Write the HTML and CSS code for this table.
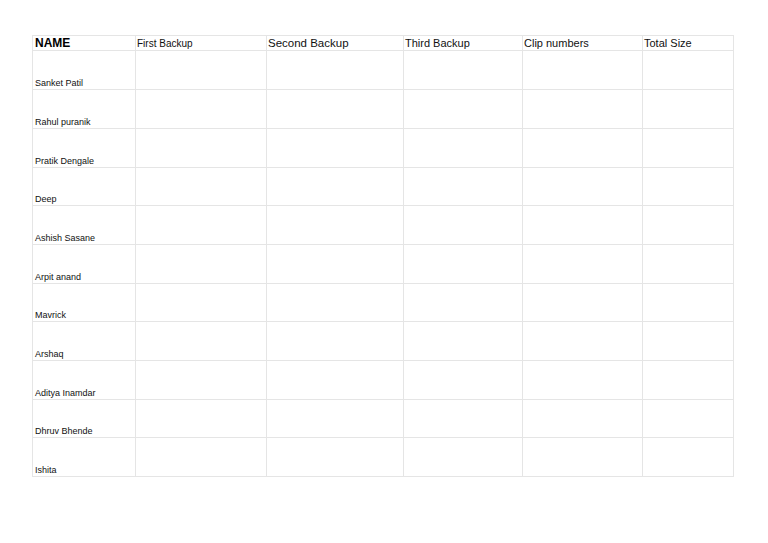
FILE: index.html
```html
<!DOCTYPE html>
<html>
<head>
<meta charset="utf-8">
<link rel="stylesheet" href="styles.css">
</head>
<body>
<div class="sheet">
  <div class="cell head name-head">NAME</div>
  <div class="cell head small">First Backup</div>
  <div class="cell head large">Second Backup</div>
  <div class="cell head">Third Backup</div>
  <div class="cell head">Clip numbers</div>
  <div class="cell head">Total Size</div>

  <div class="cell name">Sanket Patil</div><div class="cell"></div><div class="cell"></div><div class="cell"></div><div class="cell"></div><div class="cell"></div>
  <div class="cell name">Rahul puranik</div><div class="cell"></div><div class="cell"></div><div class="cell"></div><div class="cell"></div><div class="cell"></div>
  <div class="cell name">Pratik Dengale</div><div class="cell"></div><div class="cell"></div><div class="cell"></div><div class="cell"></div><div class="cell"></div>
  <div class="cell name">Deep</div><div class="cell"></div><div class="cell"></div><div class="cell"></div><div class="cell"></div><div class="cell"></div>
  <div class="cell name">Ashish Sasane</div><div class="cell"></div><div class="cell"></div><div class="cell"></div><div class="cell"></div><div class="cell"></div>
  <div class="cell name">Arpit anand</div><div class="cell"></div><div class="cell"></div><div class="cell"></div><div class="cell"></div><div class="cell"></div>
  <div class="cell name">Mavrick</div><div class="cell"></div><div class="cell"></div><div class="cell"></div><div class="cell"></div><div class="cell"></div>
  <div class="cell name">Arshaq</div><div class="cell"></div><div class="cell"></div><div class="cell"></div><div class="cell"></div><div class="cell"></div>
  <div class="cell name">Aditya Inamdar</div><div class="cell"></div><div class="cell"></div><div class="cell"></div><div class="cell"></div><div class="cell"></div>
  <div class="cell name">Dhruv Bhende</div><div class="cell"></div><div class="cell"></div><div class="cell"></div><div class="cell"></div><div class="cell"></div>
  <div class="cell name">Ishita</div><div class="cell"></div><div class="cell"></div><div class="cell"></div><div class="cell"></div><div class="cell"></div>
</div>
</body>
</html>
```
FILE: styles.css
```css
html, body {
  margin: 0;
  padding: 0;
  background: #ffffff;
}
body {
  font-family: "Liberation Sans", Arial, sans-serif;
  color: #000;
}
.sheet {
  margin: 35px 0 0 32px;
  width: 702px;
  box-sizing: border-box;
  display: grid;
  grid-template-columns: 102px 130px 136px 118px 119px 90px;
  grid-template-rows: 14px 38px 38px 38px 37px 38px 38px 37px 38px 38px 37px 38px;
  gap: 1px;
  padding: 1px;
  background: #e5e5e5;
}
.cell {
  background: #fff;
  overflow: hidden;
  white-space: nowrap;
}
.head {
  font-size: 11px;
  line-height: 14px;
  padding: 0 0 0 1px;
  box-sizing: border-box;
  display: flex;
  align-items: center;
  color: #111;
}
.head.small {
  font-size: 10px;
  padding-top: 1px;
}
.head.large {
  font-size: 11.5px;
}
.name-head {
  font-weight: bold;
  font-size: 12px;
  padding-left: 2px;
  color: #000;
}
.name {
  font-size: 9px;
  padding-left: 2px;
  padding-bottom: 1px;
  display: flex;
  align-items: flex-end;
  box-sizing: border-box;
  color: #111;
}
```
